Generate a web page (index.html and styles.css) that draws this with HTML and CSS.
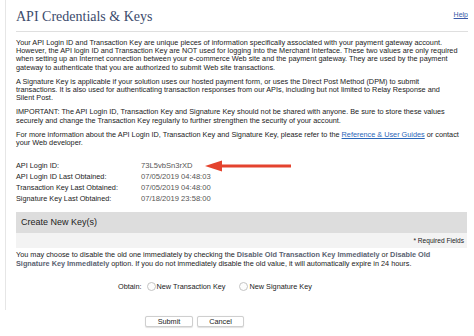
FILE: index.html
```html
<!DOCTYPE html>
<html>
<head>
<meta charset="utf-8">
<link rel="stylesheet" href="styles.css">
</head>
<body>
<div class="panel">
  <div class="title-bar">
    <h1 class="title">API Credentials &amp; Keys</h1>
    <a class="help" href="#">Help</a>
  </div>
  <div class="intro">
    <p>Your API Login ID and Transaction Key are unique pieces of information specifically associated with your payment gateway account.<br>However, the API login ID and Transaction Key are NOT used for logging into the Merchant Interface. These two values are only required<br>when setting up an Internet connection between your e-commerce Web site and the payment gateway. They are used by the payment<br>gateway to authenticate that you are authorized to submit Web site transactions.</p>
    <p>A Signature Key is applicable if your solution uses our hosted payment form, or uses the Direct Post Method (DPM) to submit<br>transactions. It is also used for authenticating transaction responses from our APIs, including but not limited to Relay Response and<br>Silent Post.</p>
    <p>IMPORTANT: The API Login ID, Transaction Key and Signature Key should not be shared with anyone. Be sure to store these values<br>securely and change the Transaction Key regularly to further strengthen the security of your account.</p>
    <p>For more information about the API Login ID, Transaction Key and Signature Key, please refer to the <a class="link" href="#">Reference &amp; User Guides</a> or contact<br>your Web developer.</p>
  </div>
  <div class="info">
    <span class="label">API Login ID:</span><span class="value">73L5vbSn3rXD</span>
    <span class="label">API Login ID Last Obtained:</span><span class="value">07/05/2019 04:48:03</span>
    <span class="label">Transaction Key Last Obtained:</span><span class="value">07/05/2019 04:48:00</span>
    <span class="label">Signature Key Last Obtained:</span><span class="value">07/18/2019 23:58:00</span>
    <svg class="arrow" width="90" height="14" viewBox="0 0 90 14">
      <path d="M0 7 L17 1.5 L17 12.5 Z" fill="#e4432e"/>
      <rect x="15" y="5.5" width="71" height="3" fill="#e4432e"/>
    </svg>
  </div>
  <div class="section-bar">Create New Key(s)</div>
  <div class="req">* Required Fields</div>
  <p class="note">You may choose to disable the old one immediately by checking the <b>Disable Old Transaction Key Immediately</b> or <b>Disable Old<br>Signature Key Immediately</b> option. If you do not immediately disable the old value, it will automatically expire in 24 hours.</p>
  <div class="obtain">
    <span class="obtain-label">Obtain:</span>
    <span class="radio"></span><span class="opt">New Transaction Key</span>
    <span class="radio second"></span><span class="opt">New Signature Key</span>
  </div>
</div>
<div class="actions">
  <button class="btn submit">Submit</button>
  <button class="btn cancel">Cancel</button>
</div>
</body>
</html>
```
FILE: styles.css
```css
html, body {
  margin: 0;
  padding: 0;
  background: #ffffff;
}
body {
  font-family: "Liberation Sans", Arial, sans-serif;
  color: #1b1b1b;
  width: 474px;
  height: 336px;
  overflow: hidden;
}
.panel {
  margin-left: 5px;
  border-left: 1px solid #e6e6e6;
  padding: 0 0 18px 10px;
  width: 452px;
}
.title-bar {
  display: flex;
  justify-content: space-between;
  align-items: flex-start;
  padding: 9px 0 6px;
  border-bottom: 1px solid #dfdfdf;
}
.title {
  margin: 0;
  font-family: "Liberation Serif", "Times New Roman", serif;
  font-weight: normal;
  font-size: 14px;
  line-height: 16px;
  color: #3b4b6d;
}
.help {
  margin-top: 1px;
  font-size: 7px;
  line-height: 10px;
  color: #3a5aa8;
  text-decoration: underline;
}
.intro p {
  margin: 6px 0 0;
  font-size: 7.3px;
  line-height: 8.2px;
  white-space: nowrap;
}
.intro p:first-child {
  margin-top: 7px;
}
.link {
  color: #2a66b8;
  text-decoration: underline;
}
.info {
  position: relative;
  display: grid;
  grid-template-columns: 125px auto;
  grid-auto-rows: 11px;
  align-items: center;
  margin-top: 13px;
  font-size: 7.3px;
}
.value {
  color: #555555;
  font-size: 7.6px;
}
.arrow {
  position: absolute;
  left: 189px;
  top: -1.5px;
}
.section-bar {
  margin-top: 7.5px;
  height: 21px;
  line-height: 21px;
  background: #dddddd;
  padding-left: 5px;
  font-size: 9px;
  color: #222222;
  margin-right: 1px;
}
.req {
  height: 15px;
  line-height: 15px;
  background: #f3f3f3;
  text-align: right;
  padding-right: 3px;
  font-size: 6.6px;
  color: #222222;
  margin-right: 1px;
}
.note {
  margin: 3.5px 0 0;
  font-size: 7.3px;
  line-height: 8.8px;
  white-space: nowrap;
}
.note b {
  color: #5a6372;
}
.obtain {
  display: flex;
  align-items: center;
  height: 11px;
  margin-top: 12px;
  padding-left: 102px;
  font-size: 7.3px;
}
.obtain-label {
  margin-right: 5px;
}
.radio {
  display: inline-block;
  box-sizing: border-box;
  width: 9px;
  height: 9px;
  border: 1px solid #c4c4c4;
  border-radius: 50%;
  background: #fdfdfd;
  margin-right: 1px;
}
.radio.second {
  margin-left: 14px;
}
.actions {
  display: flex;
  gap: 4px;
  padding-left: 145px;
  margin-top: 6px;
}
.btn {
  box-sizing: border-box;
  height: 11px;
  padding: 0;
  font-family: "Liberation Sans", Arial, sans-serif;
  font-size: 7.3px;
  line-height: 9px;
  color: #222222;
  background: #ffffff;
  border: 1px solid #cfcfcf;
  border-radius: 2px;
  box-shadow: 0 0.5px 1px rgba(0,0,0,0.12);
}
.submit {
  width: 48px;
}
.cancel {
  width: 47px;
}
```
